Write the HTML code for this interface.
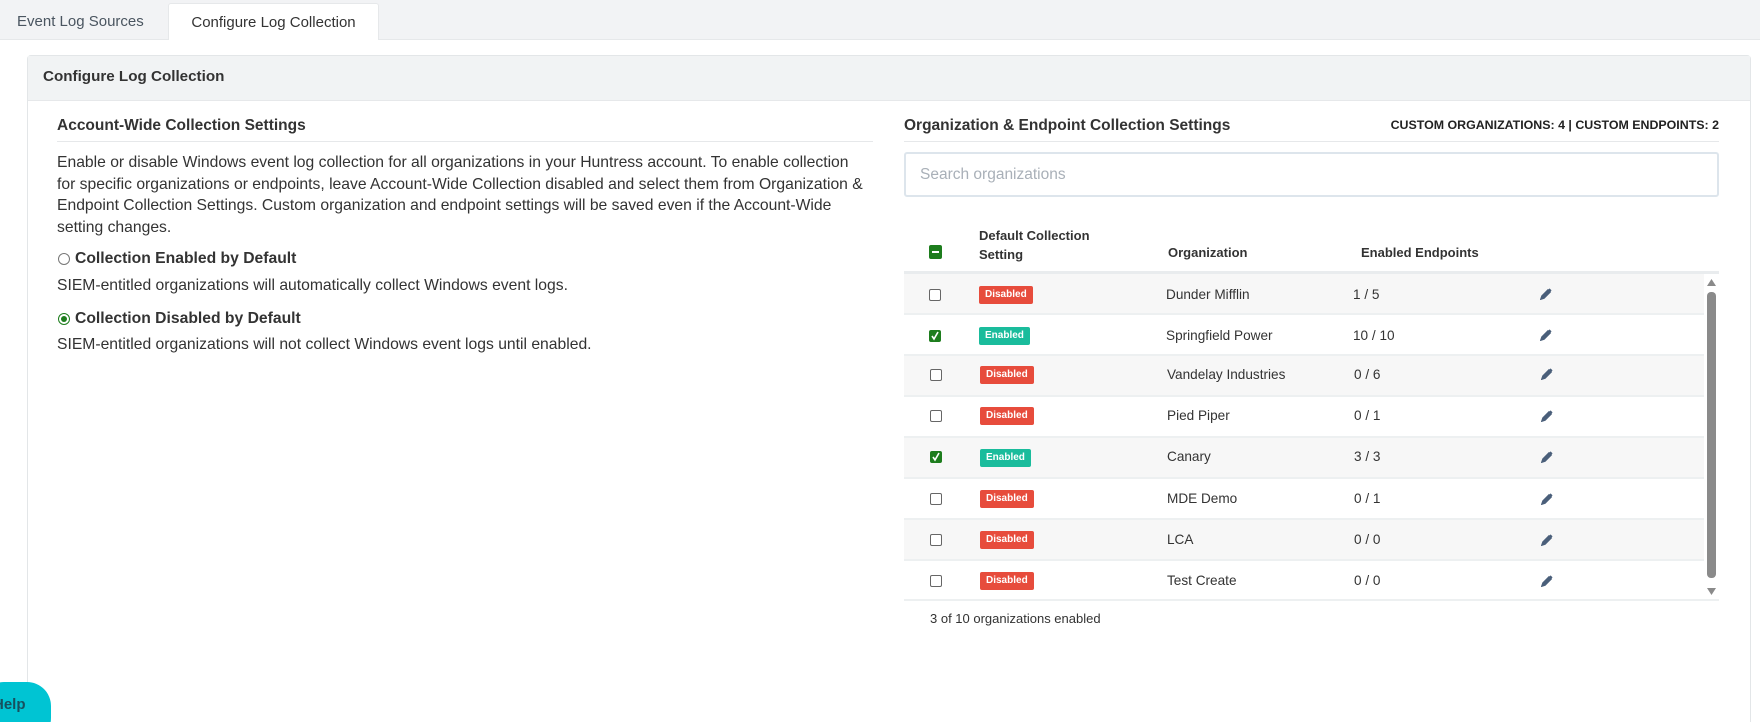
<!DOCTYPE html>
<html><head><meta charset="utf-8"><style>
*{box-sizing:border-box;margin:0;padding:0}
html{width:1760px;height:722px;overflow:hidden}
body{width:1760px;height:722px;overflow:hidden;background:#fff;font-family:"Liberation Sans",sans-serif;color:#333;position:relative}
.a{position:absolute;white-space:nowrap}
.tabbar{position:absolute;left:0;top:0;width:1760px;height:40px;background:#f2f3f5;border-bottom:1px solid #e6e8ea}
.tab{position:absolute;top:3px;height:37px;line-height:37px;font-size:15px;color:#4a5560}
.card{position:absolute;left:27px;top:55px;width:1724px;height:667px;border:1px solid #e3e6e8;border-bottom:none;border-radius:4px 4px 0 0}
.chead{position:absolute;left:0;top:0;right:0;height:45px;background:#f1f3f4;border-bottom:1px solid #e6e8ea}
.b{font-weight:bold}
.p{font-size:15.7px;color:#333}
.cb{position:absolute;width:12px;height:12px;border:1px solid #666;border-radius:2px;background:#fff}
.cb.on{background:#1d7d1d;border-color:#1d7d1d}
.badge{position:absolute;height:18px;line-height:18px;padding:0 6px;font-size:10px;font-weight:bold;color:#fff;border-radius:2px}
.dis{background:#e74c3c}.en{background:#1abc9c}
.row{position:absolute;left:904px;width:803px;height:41px;border-bottom:2px solid #edf0f1}
.g{background:#f7f7f7}
.td{font-size:13.6px;color:#333}
</style></head><body>
<div class="tabbar"></div>
<div class="tab" style="left:17px">Event Log Sources</div>
<div class="tab" style="left:168px;width:211px;background:#fff;border:1px solid #e6e8ea;border-bottom:none;border-radius:3px 3px 0 0;text-align:center;color:#333">Configure Log Collection</div>

<div class="card"><div class="chead"></div></div>
<div class="a b" style="left:43px;top:68px;font-size:15.2px">Configure Log Collection</div>

<div class="a b" style="left:57px;top:117px;font-size:15.5px">Account-Wide Collection Settings</div>
<div class="a" style="left:57px;top:141px;width:816px;height:1px;background:#e6e8ea"></div>
<div class="a p" style="left:57px;top:152px;line-height:21.5px">Enable or disable Windows event log collection for all organizations in your Huntress account. To enable collection<br>for specific organizations or endpoints, leave Account-Wide Collection disabled and select them from Organization &amp;<br>Endpoint Collection Settings. Custom organization and endpoint settings will be saved even if the Account-Wide<br>setting changes.</div>
<div class="a" style="left:58px;top:253px;width:12px;height:12px;border:1px solid #777;border-radius:50%"></div>
<div class="a b p" style="left:75px;top:250px">Collection Enabled by Default</div>
<div class="a p" style="left:57px;top:277px">SIEM-entitled organizations will automatically collect Windows event logs.</div>
<div class="a" style="left:58px;top:313px;width:12px;height:12px;border:1px solid #1d7d1d;border-radius:50%"><div style="position:absolute;left:2px;top:2px;width:6px;height:6px;border-radius:50%;background:#1d7d1d"></div></div>
<div class="a b p" style="left:75px;top:310px">Collection Disabled by Default</div>
<div class="a p" style="left:57px;top:336px">SIEM-entitled organizations will not collect Windows event logs until enabled.</div>

<div class="a b" style="left:904px;top:117px;font-size:15.5px">Organization &amp; Endpoint Collection Settings</div>
<div class="a b" style="right:41px;top:118px;font-size:12.4px;color:#222">CUSTOM ORGANIZATIONS: 4 | CUSTOM ENDPOINTS: 2</div>
<div class="a" style="left:904px;top:141px;width:815px;height:1px;background:#e6e8ea"></div>
<div class="a" style="left:904px;top:152px;width:815px;height:45px;border:2px solid #dde5ec;border-radius:3px"></div>
<div class="a" style="left:920px;top:166px;font-size:15.5px;color:#a9b0b8">Search organizations</div>

<div class="cb on" style="left:929px;top:245px;width:13px;height:14px"><div style="position:absolute;left:2px;top:5px;width:7px;height:2px;background:#fff"></div></div>
<div class="a b" style="left:979px;top:226px;font-size:13px;line-height:19px">Default Collection<br>Setting</div>
<div class="a b" style="left:1168px;top:245px;font-size:13px">Organization</div>
<div class="a b" style="left:1361px;top:245px;font-size:13px">Enabled Endpoints</div>
<div class="a" style="left:904px;top:271px;width:815px;height:3px;background:#e9ecee"></div>

<div class="row g" style="top:274px"></div>
<div class="row" style="top:315px"></div>
<div class="row g" style="top:356px"></div>
<div class="row" style="top:397px"></div>
<div class="row g" style="top:438px"></div>
<div class="row" style="top:479px"></div>
<div class="row g" style="top:520px"></div>
<div class="row" style="top:561px;border-bottom:none"></div>
<div class="a" style="left:904px;top:599px;width:815px;height:2px;background:#edf0f1"></div>

<div class="cb" style="left:929px;top:289px"></div><div class="badge dis" style="left:979px;top:286px">Disabled</div><div class="a td" style="left:1166px;top:287px">Dunder Mifflin</div><div class="a td" style="left:1353px;top:287px">1 / 5</div>
<div class="cb on" style="left:929px;top:330px"><svg width="10" height="10" style="position:absolute;left:0;top:0"><path d="M2 5 L4 8 L8 1" stroke="#fff" stroke-width="1.6" fill="none"/></svg></div><div class="badge en" style="left:979px;top:327px">Enabled</div><div class="a td" style="left:1166px;top:328px">Springfield Power</div><div class="a td" style="left:1353px;top:328px">10 / 10</div>
<div class="cb" style="left:930px;top:369px"></div><div class="badge dis" style="left:980px;top:366px">Disabled</div><div class="a td" style="left:1167px;top:367px">Vandelay Industries</div><div class="a td" style="left:1354px;top:367px">0 / 6</div>
<div class="cb" style="left:930px;top:410px"></div><div class="badge dis" style="left:980px;top:407px">Disabled</div><div class="a td" style="left:1167px;top:408px">Pied Piper</div><div class="a td" style="left:1354px;top:408px">0 / 1</div>
<div class="cb on" style="left:930px;top:451px"><svg width="10" height="10" style="position:absolute;left:0;top:0"><path d="M2 5 L4 8 L8 1" stroke="#fff" stroke-width="1.6" fill="none"/></svg></div><div class="badge en" style="left:980px;top:449px">Enabled</div><div class="a td" style="left:1167px;top:449px">Canary</div><div class="a td" style="left:1354px;top:449px">3 / 3</div>
<div class="cb" style="left:930px;top:493px"></div><div class="badge dis" style="left:980px;top:490px">Disabled</div><div class="a td" style="left:1167px;top:491px">MDE Demo</div><div class="a td" style="left:1354px;top:491px">0 / 1</div>
<div class="cb" style="left:930px;top:534px"></div><div class="badge dis" style="left:980px;top:531px">Disabled</div><div class="a td" style="left:1167px;top:532px">LCA</div><div class="a td" style="left:1354px;top:532px">0 / 0</div>
<div class="cb" style="left:930px;top:575px"></div><div class="badge dis" style="left:980px;top:572px">Disabled</div><div class="a td" style="left:1167px;top:573px">Test Create</div><div class="a td" style="left:1354px;top:573px">0 / 0</div>

<svg class="a" style="left:1540px;top:288px" width="12" height="12"><path d="M1 11 L2 8 L8 2 L10 4 L4 10 Z M9 1 L11 3" stroke="#4a5f7a" stroke-width="1.6" fill="#4a5f7a"/></svg>
<svg class="a" style="left:1540px;top:329px" width="12" height="12"><path d="M1 11 L2 8 L8 2 L10 4 L4 10 Z M9 1 L11 3" stroke="#4a5f7a" stroke-width="1.6" fill="#4a5f7a"/></svg>
<svg class="a" style="left:1541px;top:368px" width="12" height="12"><path d="M1 11 L2 8 L8 2 L10 4 L4 10 Z M9 1 L11 3" stroke="#4a5f7a" stroke-width="1.6" fill="#4a5f7a"/></svg>
<svg class="a" style="left:1541px;top:410px" width="12" height="12"><path d="M1 11 L2 8 L8 2 L10 4 L4 10 Z M9 1 L11 3" stroke="#4a5f7a" stroke-width="1.6" fill="#4a5f7a"/></svg>
<svg class="a" style="left:1541px;top:451px" width="12" height="12"><path d="M1 11 L2 8 L8 2 L10 4 L4 10 Z M9 1 L11 3" stroke="#4a5f7a" stroke-width="1.6" fill="#4a5f7a"/></svg>
<svg class="a" style="left:1541px;top:493px" width="12" height="12"><path d="M1 11 L2 8 L8 2 L10 4 L4 10 Z M9 1 L11 3" stroke="#4a5f7a" stroke-width="1.6" fill="#4a5f7a"/></svg>
<svg class="a" style="left:1541px;top:534px" width="12" height="12"><path d="M1 11 L2 8 L8 2 L10 4 L4 10 Z M9 1 L11 3" stroke="#4a5f7a" stroke-width="1.6" fill="#4a5f7a"/></svg>
<svg class="a" style="left:1541px;top:575px" width="12" height="12"><path d="M1 11 L2 8 L8 2 L10 4 L4 10 Z M9 1 L11 3" stroke="#4a5f7a" stroke-width="1.6" fill="#4a5f7a"/></svg>

<div class="a" style="left:1704px;top:274px;width:14px;height:325px;background:#fff"></div>
<svg class="a" style="left:1707px;top:279px" width="9" height="7"><path d="M0 7 L4.5 0 L9 7Z" fill="#8a8a8a"/></svg>
<div class="a" style="left:1707px;top:292px;width:9px;height:286px;background:#8a8a8a;border-radius:4px"></div>
<svg class="a" style="left:1707px;top:588px" width="9" height="7"><path d="M0 0 L4.5 7 L9 0Z" fill="#8a8a8a"/></svg>

<div class="a" style="left:930px;top:611px;font-size:13px">3 of 10 organizations enabled</div>

<div class="a" style="left:-20px;top:682px;width:71px;height:60px;background:#00c4d3;border-radius:24px"></div>
<div class="a b" style="left:-7px;top:696px;font-size:15px;color:#17505e">Help</div>
</body></html>
